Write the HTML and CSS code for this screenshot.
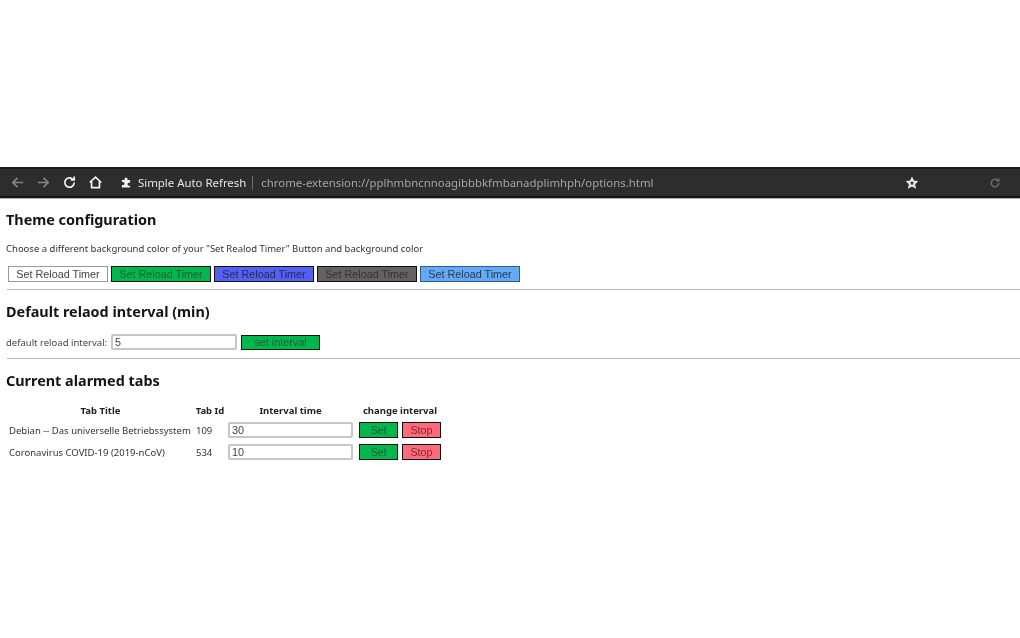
FILE: index.html
```html
<!DOCTYPE html>
<html lang="en">
<head>
    <meta charset="UTF-8">
    <title>Simple Auto Refresh</title>
    <link rel="stylesheet" href="styles.css">
</head>
<body>
    <div class="toolbar">
        <svg class="tool-icon dim" viewBox="0 0 16 16"><path d="M14 8H3M8 3L3 8l5 5"/></svg>
        <svg class="tool-icon dim" viewBox="0 0 16 16"><path d="M2 8h11M8 3l5 5-5 5"/></svg>
        <svg class="tool-icon" viewBox="0 0 16 16"><path d="M13 8a5 5 0 1 1-1.500-3.500M13 1.500v3.600H9.400"/></svg>
        <svg class="tool-icon" viewBox="0 0 16 16"><path d="M1.800 8L8 2.200 14.200 8M3.800 7v6.500h8.400V7"/></svg>
        <svg class="ext-icon" viewBox="0 0 16 16"><path d="M6 2.500a2 2 0 0 1 4 0V4h3.500v3.500H12a2 2 0 0 0 0 4h1.500V14H2.500v-3.500H4a2 2 0 0 0 0-4H2.500V4H6z"/></svg>
        <span class="ext-name">Simple Auto Refresh</span>
        <span class="sep"></span>
        <span class="url">chrome-extension://pplhmbncnnoagibbbkfmbanadplimhph/options.html</span>
        <svg class="star" viewBox="0 0 16 16"><path d="M8 2.200l1.700 3.700 4 .5-2.900 2.700.8 4L8 11.100l-3.600 2 .8-4-2.900-2.700 4-.5z"/></svg>
        <svg class="reload-small" viewBox="0 0 16 16"><path d="M13 8a5 5 0 1 1-1.500-3.500M13 2v3.200H9.800"/></svg>
    </div>

    <div class="page">
        <h3>Theme configuration</h3>
        <p class="note">Choose a different background color of your "Set Realod Timer" Button and background color</p>
        <div class="themes">
            <button class="btn theme white">Set Reload Timer</button>
            <button class="btn theme green">Set Reload Timer</button>
            <button class="btn theme blue">Set Reload Timer</button>
            <button class="btn theme gray">Set Reload Timer</button>
            <button class="btn theme sky">Set Reload Timer</button>
        </div>
        <hr>

        <h3>Default relaod interval (min)</h3>
        <div class="interval-row">
            <label for="defaultInterval">default reload interval:</label>
            <input id="defaultInterval" class="field" type="text" value="5">
            <button class="btn green set-interval">set interval</button>
        </div>
        <hr class="after-row">

        <h3>Current alarmed tabs</h3>
        <table class="alarms">
            <tr>
                <th class="col-title">Tab Title</th>
                <th class="col-id">Tab Id</th>
                <th class="col-time">Interval time</th>
                <th class="col-change">change interval</th>
            </tr>
            <tr>
                <td>Debian -- Das universelle Betriebssystem</td>
                <td class="tab-id">109</td>
                <td><input class="field" type="text" value="30"></td>
                <td class="actions"><button class="btn green small">Set</button><button class="btn red small">Stop</button></td>
            </tr>
            <tr>
                <td>Coronavirus COVID-19 (2019-nCoV)</td>
                <td class="tab-id">534</td>
                <td><input class="field" type="text" value="10"></td>
                <td class="actions"><button class="btn green small">Set</button><button class="btn red small">Stop</button></td>
            </tr>
        </table>
    </div>
</body>
</html>
```

FILE: styles.css
```css
body {
    margin: 0;
    padding-top: 167px;
    background: #fff;
    font-family: "Noto Sans", "Open Sans", sans-serif;
    color: #222;
    overflow: hidden;
}
.toolbar {
    display: flex;
    align-items: center;
    height: 27px;
    background: #2d2d2d;
    border-top: 2px solid #1b1b1b;
    border-bottom: 2px solid #141414;
    box-shadow: 0 1px 0 #b0b0b0;
    filter: blur(0.45px);
}
.tool-icon {
    width: 15px;
    height: 15px;
    margin-left: 11px;
    fill: none;
    stroke: #f2f2f2;
    stroke-width: 1.8;
}
.tool-icon:first-child {
    margin-left: 10px;
}
.tool-icon.dim {
    stroke: #858585;
}
.ext-icon {
    width: 12px;
    height: 12px;
    margin-left: 17px;
    fill: #f0f0f0;
}
.ext-name {
    margin-left: 6px;
    font-size: 11.4px;
    color: #e6e6e6;
    white-space: nowrap;
}
.sep {
    width: 1px;
    height: 14px;
    margin: 0 8px 0 6px;
    background: #6f6f6f;
}
.url {
    font-size: 11.4px;
    color: #a4a4a4;
    white-space: nowrap;
}
.star {
    width: 12px;
    height: 12px;
    margin-left: auto;
    fill: none;
    stroke: #e8e8e8;
    stroke-width: 2.6;
}
.reload-small {
    width: 12px;
    height: 12px;
    margin: 0 19px 0 71px;
    fill: none;
    stroke: #6b6b6b;
    stroke-width: 2;
}
.page {
    padding-left: 6px;
    filter: blur(0.45px);
}
h3 {
    margin: 0;
    padding-top: 12px;
    font-size: 14.4px;
    line-height: 19px;
    font-weight: 700;
    color: #141414;
}
.note {
    margin: 14px 0 0;
    font-size: 9.5px;
    line-height: 12px;
    color: #333;
}
.themes {
    display: flex;
    gap: 3px;
    margin: 11px 0 0 2px;
}
.btn {
    box-sizing: border-box;
    padding: 0;
    border: 1px solid #111;
    font-family: "Liberation Sans", Arial, sans-serif;
    font-size: 10.8px;
    color: #333;
}
.theme {
    width: 100px;
    height: 16px;
}
.white {
    background: #fff;
    border-color: #999;
    color: #444;
}
.green {
    background: #00b64f;
    color: #1b5f37;
}
.blue {
    background: #5560f2;
    color: #23285f;
}
.gray {
    background: #666161;
    color: #343131;
}
.sky {
    background: #66a8f2;
    color: #1f3a5c;
    border-color: #2a5f9a;
}
.red {
    background: #ff6b7a;
    color: #7a2a34;
}
hr {
    height: 1px;
    margin: 7px 0 0 1px;
    border: none;
    background: #b5b5b5;
}
hr.after-row {
    margin-top: 8px;
}
.interval-row {
    display: flex;
    align-items: center;
    margin-top: 13px;
    font-size: 9.5px;
    color: #444;
}
.interval-row label {
    width: 105px;
    white-space: nowrap;
}
.field {
    box-sizing: border-box;
    width: 126px;
    height: 16px;
    padding: 0 2px;
    border: 2px solid #c6c6c6;
    border-radius: 2px;
    font-family: "Liberation Sans", Arial, sans-serif;
    font-size: 10.8px;
    color: #444;
    background: #fff;
}
.set-interval {
    width: 79px;
    height: 15px;
    margin-left: 4px;
}
.alarms {
    margin-top: 11px;
    border-collapse: collapse;
    font-size: 9.5px;
    color: #333;
}
.alarms th {
    height: 18px;
    padding: 0;
    font-weight: 700;
    color: #222;
    text-align: center;
}
.alarms td {
    height: 22px;
    padding: 0 0 0 3px;
    white-space: nowrap;
}
.col-title {
    width: 189px;
}
.col-id {
    width: 30px;
}
.alarms .col-time {
    width: 131px;
    padding-right: 2px;
}
.alarms .col-change {
    width: 84px;
    padding-right: 4px;
}
.alarms .tab-id {
    padding-left: 1px;
}
.alarms .field {
    width: 125px;
}
.alarms .actions {
    padding-left: 1px;
    font-size: 0;
}
.small {
    width: 39px;
    height: 16px;
    margin-right: 4px;
}
```
